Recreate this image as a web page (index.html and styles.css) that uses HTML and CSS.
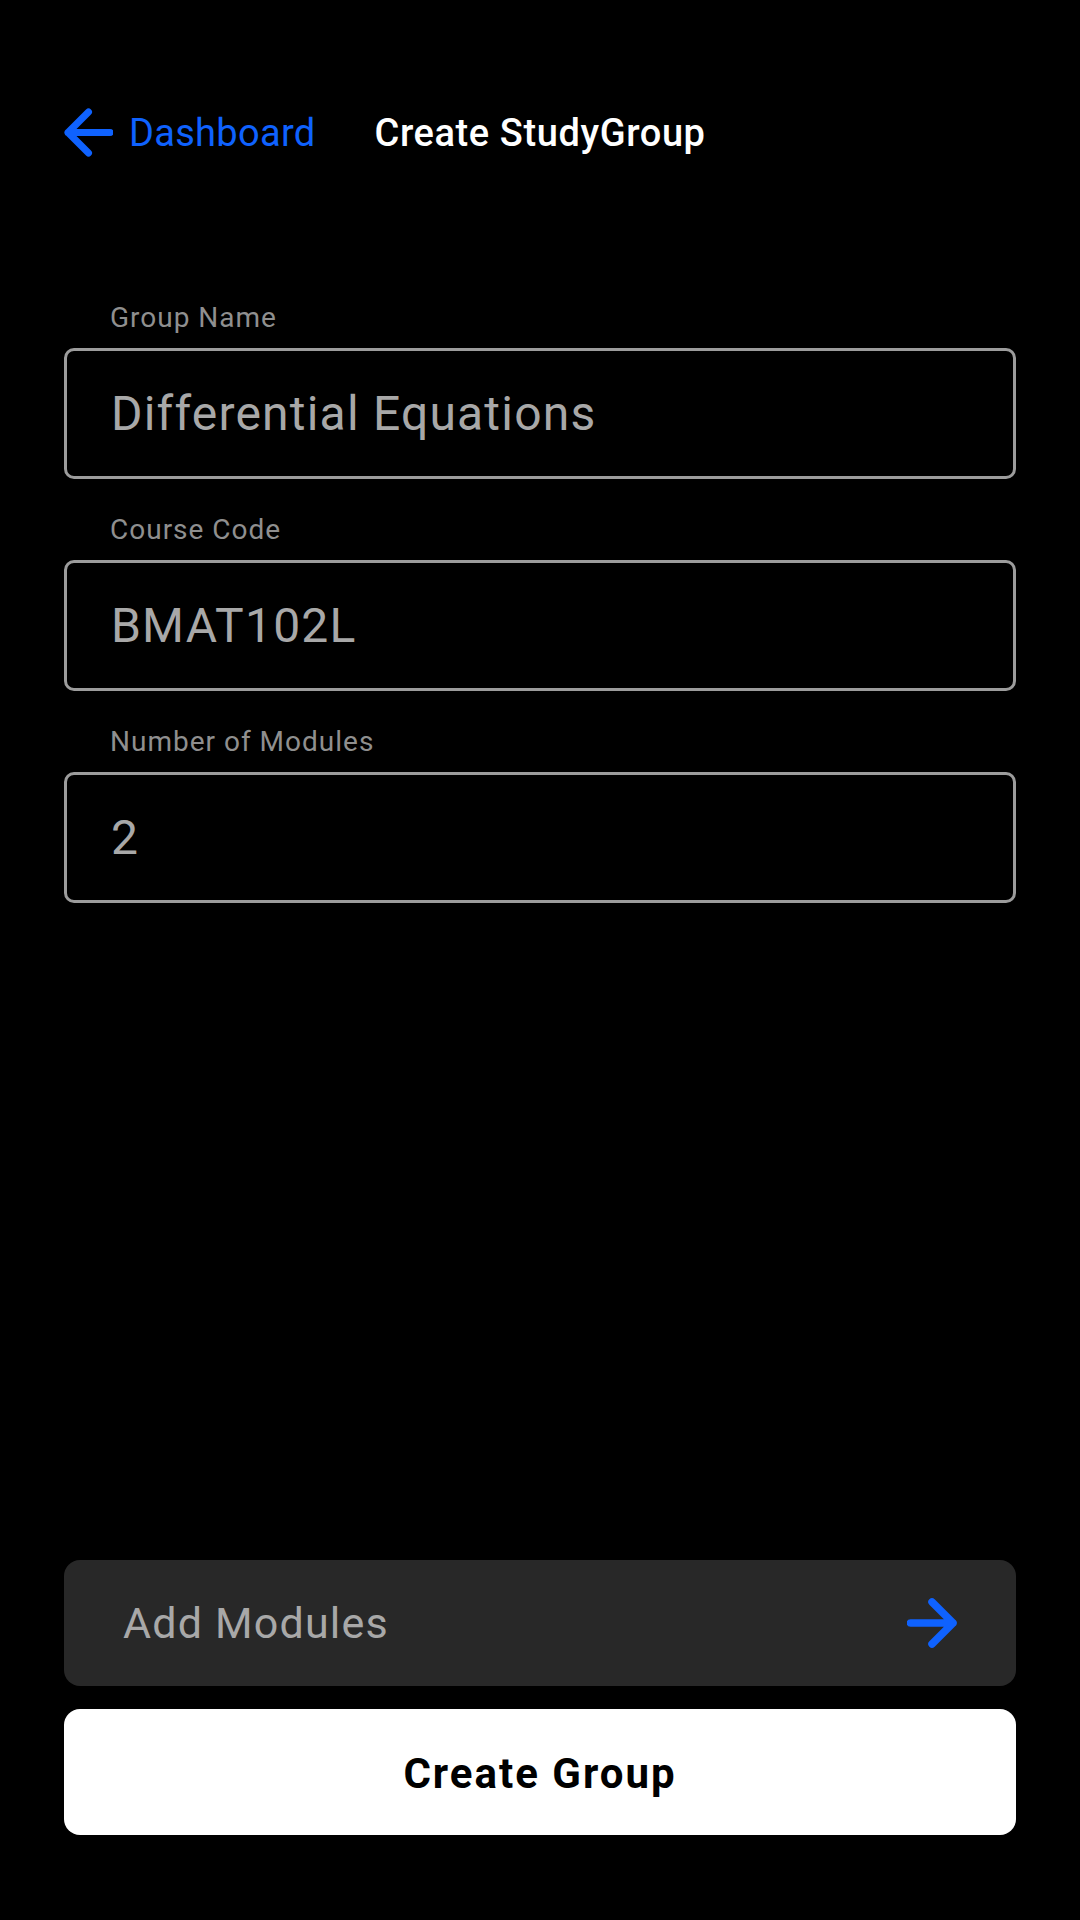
FILE: index.html
```html
<!DOCTYPE html>
<html lang="en">
<head>
<meta charset="utf-8">
<title>Create StudyGroup</title>
<link rel="stylesheet" href="styles.css">
</head>
<body>
<div class="page">
  <header class="header">
    <a class="back" href="#">
      <svg class="back-icon" viewBox="0 0 49 49" width="49" height="49" aria-hidden="true">
        <path d="M46 24.5H4M24.5 4L4 24.5L24.5 45" fill="none" stroke="#0f62fe" stroke-width="7" stroke-linecap="round" stroke-linejoin="round"/>
      </svg>
      <span class="back-text">Dashboard</span>
    </a>
    <h1 class="title">Create StudyGroup</h1>
  </header>

  <form class="form">
    <div class="field">
      <label class="label">Group Name</label>
      <div class="input">Differential Equations</div>
    </div>
    <div class="field">
      <label class="label">Course Code</label>
      <div class="input">BMAT102L</div>
    </div>
    <div class="field">
      <label class="label">Number of Modules</label>
      <div class="input">2</div>
    </div>
  </form>

  <div class="spacer"></div>

  <footer class="actions">
    <button class="add-modules" type="button">
      <span class="add-text">Add Modules</span>
      <svg class="add-icon" viewBox="0 0 50 50" width="50" height="50" aria-hidden="true">
        <path d="M3.5 25H46M25 4L46 25L25 46" fill="none" stroke="#0f62fe" stroke-width="7.5" stroke-linecap="round" stroke-linejoin="round"/>
      </svg>
    </button>
    <button class="create" type="button">Create Group</button>
  </footer>
</div>
</body>
</html>
```

FILE: styles.css
```css
* {
  box-sizing: border-box;
}

html, body {
  margin: 0;
  padding: 0;
  background: #000;
}

body {
  font-family: Roboto, "Liberation Sans", sans-serif;
  color: #a8a8a8;
}

.page {
  width: 1080px;
  height: 1920px;
  display: flex;
  flex-direction: column;
  padding: 0 64px;
}

.header {
  display: flex;
  align-items: center;
  height: 49px;
  margin-top: 108px;
}

.back {
  display: flex;
  align-items: center;
  gap: 16px;
  text-decoration: none;
}

.back-icon {
  display: block;
  flex: none;
}

.back-text {
  color: #0f62fe;
  font-size: 38px;
  letter-spacing: 0.3px;
}

.title {
  margin: 0 0 0 59px;
  color: #fff;
  font-size: 38px;
  font-weight: 500;
  letter-spacing: 0.6px;
}

.form {
  display: flex;
  flex-direction: column;
  gap: 34px;
  margin-top: 144px;
}

.field {
  display: flex;
  flex-direction: column;
  gap: 13px;
}

.label {
  display: block;
  padding-left: 46px;
  font-size: 28px;
  line-height: 34px;
  color: #8f8f8f;
  letter-spacing: 1px;
}

.input {
  height: 131px;
  border: 3px solid #9c9c9c;
  border-radius: 10px;
  display: flex;
  align-items: center;
  padding-left: 44px;
  font-size: 48px;
  color: #a8a8a8;
  letter-spacing: 1.2px;
}

.spacer {
  flex: 1;
}

.actions {
  display: flex;
  flex-direction: column;
  gap: 23px;
  padding-bottom: 85px;
}

.add-modules {
  height: 126px;
  border: none;
  border-radius: 16px;
  background: #282828;
  display: flex;
  align-items: center;
  justify-content: space-between;
  padding: 0 59px 0 59px;
  font-family: inherit;
  cursor: pointer;
}

.add-text {
  font-size: 43px;
  color: #a8a8a8;
  letter-spacing: 1.2px;
}

.add-icon {
  display: block;
  flex: none;
}

.create {
  height: 126px;
  border: none;
  border-radius: 16px;
  background: #fff;
  color: #000;
  font-family: inherit;
  font-size: 42px;
  font-weight: 700;
  letter-spacing: 2px;
  padding-top: 4px;
  cursor: pointer;
}
```
